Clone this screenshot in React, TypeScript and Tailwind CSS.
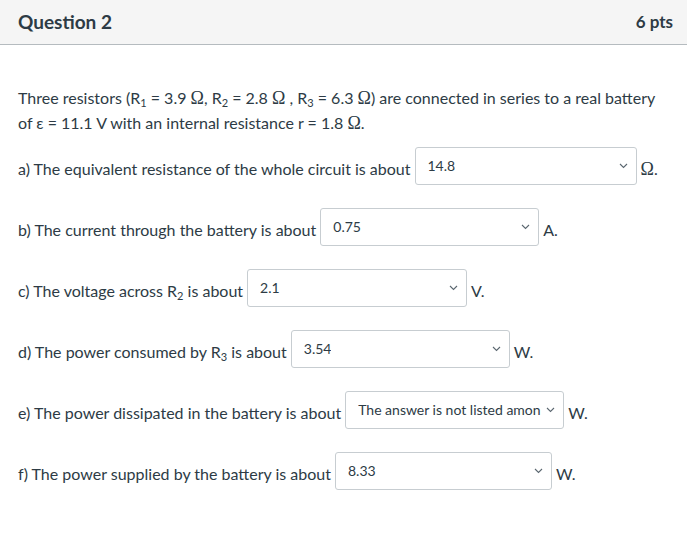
import React from 'react';

type Row = {
  label: React.ReactNode;
  value: string;
  width: number;
  unit: React.ReactNode;
};

const Omega = () => <span className="font-['Liberation_Serif',serif] text-[18px] leading-none">Ω</span>;

const Sub = ({ children }: { children: React.ReactNode }) => (
  <sub className="text-[11px] leading-none">{children}</sub>
);

function Select({ value, width }: { value: string; width: number }) {
  return (
    <div
      className="flex h-[38px] items-center justify-between rounded-[3px] border border-[#c7cdd1] bg-white pl-[12px] pr-[8px]"
      style={{ width }}
    >
      <span className="-mt-[1px] truncate text-[14px] text-[#2d3b45]">{value}</span>
      <svg width="9" height="6" viewBox="0 0 9 6" className="shrink-0">
        <path d="M1 1l3.5 3.5L8 1" fill="none" stroke="#5b6770" strokeWidth="1.1" />
      </svg>
    </div>
  );
}

const rows: Row[] = [
  { label: 'a) The equivalent resistance of the whole circuit is about', value: '14.8', width: 222, unit: <><Omega />.</> },
  { label: 'b) The current through the battery is about', value: '0.75', width: 219, unit: 'A.' },
  { label: <>c) The voltage across R<Sub>2</Sub> is about</>, value: '2.1', width: 220, unit: 'V.' },
  { label: <>d) The power consumed by R<Sub>3</Sub> is about</>, value: '3.54', width: 219, unit: 'W.' },
  { label: 'e) The power dissipated in the battery is about', value: 'The answer is not listed amon', width: 219, unit: 'W.' },
  { label: 'f) The power supplied by the battery is about', value: '8.33', width: 217, unit: 'W.' },
];

export default function App() {
  return (
    <div className="h-[552px] w-[687px] bg-white font-['Lato',sans-serif] text-[#2d3b45]">
      <div className="flex h-[45px] items-center justify-between border-b border-[#b5bbbf] bg-[#f5f5f5] pl-[18px] pr-[14px]">
        <h2 className="text-[19px] font-bold">Question 2</h2>
        <span className="text-[17px] font-bold text-[#2d3b45]">6 pts</span>
      </div>
      <div className="px-[18px] pt-[40px]">
        <p className="text-[16px] leading-[25px]">
          Three resistors (R<Sub>1</Sub> = 3.9 <Omega />, R<Sub>2</Sub> = 2.8 <Omega /> , R
          <Sub>3</Sub> = 6.3 <Omega />) are connected in series to a real battery of ɛ = 11.1 V with an internal
          resistance r = 1.8 <Omega />.
        </p>
        <div className="mt-[12px] flex flex-col gap-[23px]">
          {rows.map((r, i) => (
            <div key={i} className="flex items-end text-[16px]">
              <span className="pb-[4px] pr-[4px]">{r.label}</span>
              <Select value={r.value} width={r.width} />
              <span className="pb-[4px] pl-[4px]">{r.unit}</span>
            </div>
          ))}
        </div>
      </div>
    </div>
  );
}
